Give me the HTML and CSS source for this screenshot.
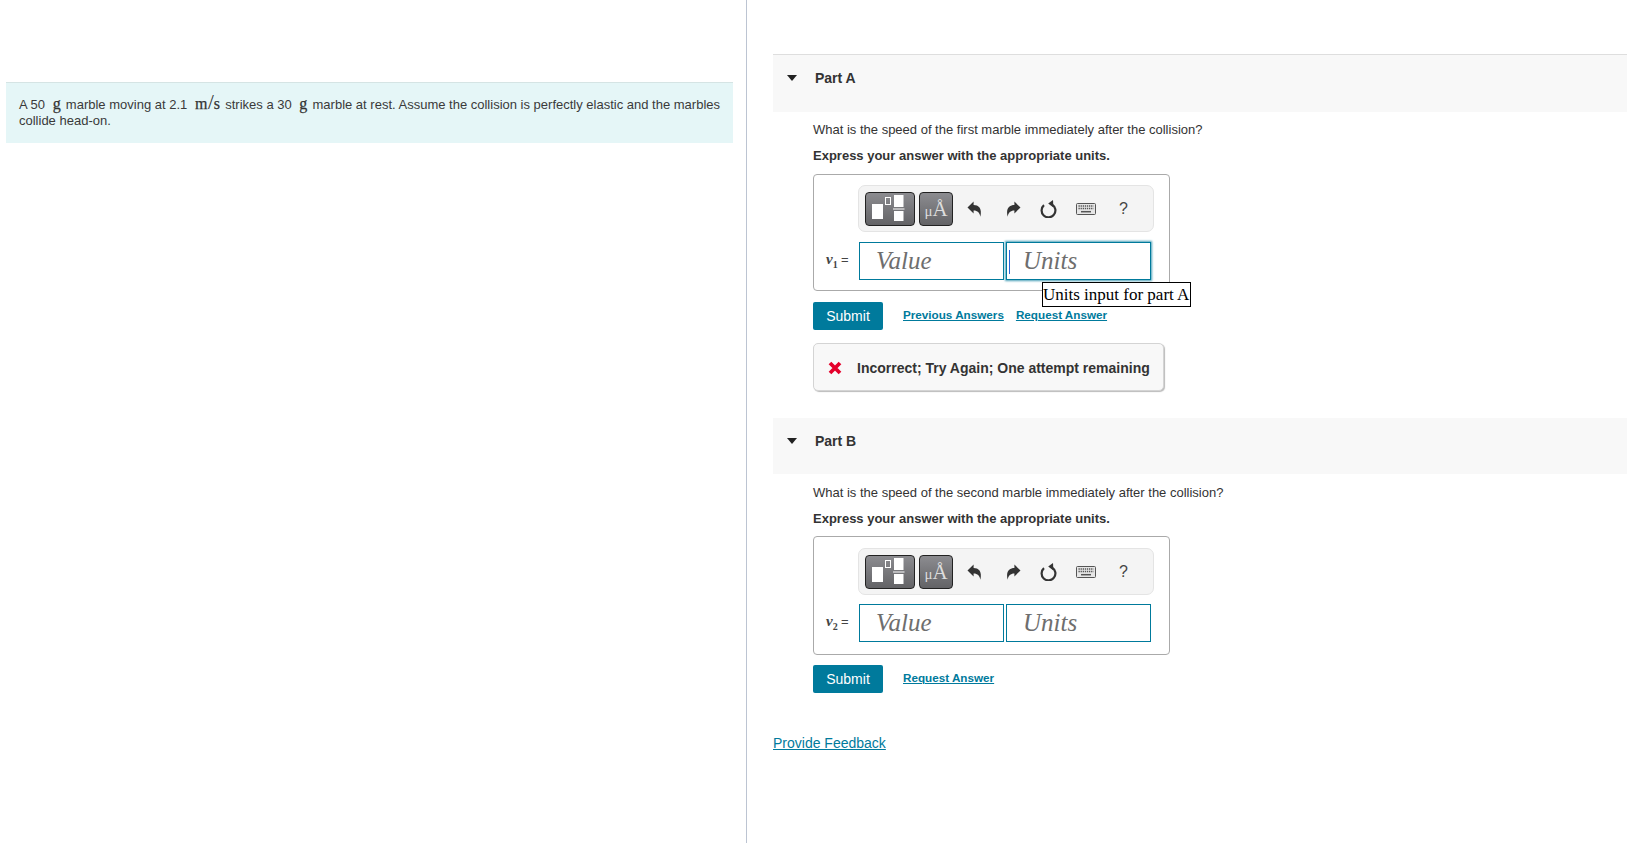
FILE: index.html
```html
<!DOCTYPE html>
<html lang="en">
<head>
<meta charset="utf-8">
<title>Marble collision</title>
<link rel="stylesheet" href="styles.css">
</head>
<body>
<svg class="defs" width="0" height="0" aria-hidden="true">
  <symbol id="i-tpl" viewBox="0 0 50 34">
    <rect x="7" y="12" width="11" height="15" fill="#fff"/>
    <rect x="20.5" y="5.5" width="5" height="7" fill="none" stroke="#fff" stroke-width="1"/>
    <rect x="29" y="3" width="9.5" height="12" fill="#fff"/>
    <rect x="28" y="16.5" width="11.5" height="1" fill="#fff"/>
    <rect x="29" y="19" width="9.5" height="10" fill="#fff"/>
  </symbol>
  <symbol id="i-undo" viewBox="0 0 16 16">
    <path d="M0.5 6.5 6.6 0.6V4C11.4 4 15.4 7 13.4 15.8 12.6 11.8 10.6 9.6 6.6 9.6V12.4Z" fill="#333"/>
  </symbol>
  <symbol id="i-redo" viewBox="0 0 16 16">
    <path d="M15.5 6.5 9.4 0.6V4C4.6 4 0.6 7 2.6 15.8 3.4 11.8 5.4 9.6 9.4 9.6V12.4Z" fill="#333"/>
  </symbol>
  <symbol id="i-reset" viewBox="0 0 18 18">
    <path d="M4 5.2A6.9 6.9 0 1 0 12.2 4.6" fill="none" stroke="#333" stroke-width="2.2"/>
    <path d="M8.2 3.4 13 0 13.4 7.4Z" fill="#333"/>
  </symbol>
  <symbol id="i-keys" viewBox="0 0 20 12">
    <rect x="0.5" y="0.5" width="19" height="11" rx="1" fill="#e6e6e6" stroke="#555"/>
    <path d="M2.5 3h15M2.5 5.5h15" stroke="#555" stroke-width="1.3" stroke-dasharray="1.3 .8"/>
    <path d="M5 8.7h10" stroke="#555" stroke-width="1.5"/>
  </symbol>
</svg>

<div class="page">
  <aside class="left">
    <p class="intro">A 50 <span class="m">g</span> marble moving at 2.1 <span class="m">m<span class="sl">/</span>s</span> strikes a 30 <span class="m">g</span> marble at rest. Assume the collision is perfectly elastic and the marbles collide head-on.</p>
  </aside>

  <main class="right">
    <section class="part">
      <header class="part-head first"><span class="caret"></span><span class="part-title">Part A</span></header>
      <div class="part-body">
        <p class="q">What is the speed of the first marble immediately after the collision?</p>
        <p class="ex">Express your answer with the appropriate units.</p>
        <div class="box">
          <div class="toolbar">
            <span class="tbtn wide"><svg width="48" height="32" viewBox="1 1 48 32"><use href="#i-tpl" width="50" height="34"/></svg></span>
            <span class="tbtn mu"><span class="mu-a">μ</span>Å</span>
            <svg class="ic undo" width="16" height="16"><use href="#i-undo"/></svg>
            <svg class="ic redo" width="16" height="16"><use href="#i-redo"/></svg>
            <svg class="ic reset" width="18" height="18"><use href="#i-reset"/></svg>
            <svg class="ic keys" width="20" height="12"><use href="#i-keys"/></svg>
            <span class="help">?</span>
          </div>
          <div class="row">
            <span class="var"><i>v</i><sub>1</sub> <span class="eq">=</span></span>
            <span class="field">Value</span>
            <span class="field focus"><span class="cursor"></span>Units
              <span class="tip">Units input for part A</span>
            </span>
          </div>
        </div>
        <div class="actions">
          <span class="submit">Submit</span>
          <a class="alink" href="#">Previous Answers</a>
          <a class="alink" href="#">Request Answer</a>
        </div>
        <div class="feedback">
          <svg class="x" width="14" height="14" viewBox="0 0 14 14"><path d="M2 2 12 12M12 2 2 12" stroke="#e4002b" stroke-width="3.8"/></svg>
          <span>Incorrect; Try Again; One attempt remaining</span>
        </div>
      </div>
    </section>

    <section class="part">
      <header class="part-head"><span class="caret"></span><span class="part-title">Part B</span></header>
      <div class="part-body">
        <p class="q">What is the speed of the second marble immediately after the collision?</p>
        <p class="ex">Express your answer with the appropriate units.</p>
        <div class="box">
          <div class="toolbar">
            <span class="tbtn wide"><svg width="48" height="32" viewBox="1 1 48 32"><use href="#i-tpl" width="50" height="34"/></svg></span>
            <span class="tbtn mu"><span class="mu-a">μ</span>Å</span>
            <svg class="ic undo" width="16" height="16"><use href="#i-undo"/></svg>
            <svg class="ic redo" width="16" height="16"><use href="#i-redo"/></svg>
            <svg class="ic reset" width="18" height="18"><use href="#i-reset"/></svg>
            <svg class="ic keys" width="20" height="12"><use href="#i-keys"/></svg>
            <span class="help">?</span>
          </div>
          <div class="row">
            <span class="var"><i>v</i><sub>2</sub> <span class="eq">=</span></span>
            <span class="field">Value</span>
            <span class="field">Units</span>
          </div>
        </div>
        <div class="actions">
          <span class="submit">Submit</span>
          <a class="alink" href="#">Request Answer</a>
        </div>
      </div>
    </section>

    <a class="provide" href="#">Provide Feedback</a>
  </main>
</div>
</body>
</html>
```

FILE: styles.css
```css
* { box-sizing: border-box; }
html, body { margin: 0; padding: 0; background: #fff; }
body { font-family: "Liberation Sans", Arial, sans-serif; color: #333; font-size: 13px; overflow: hidden; }
.defs { display: block; height: 0; }
.page { display: flex; height: 843px; }

.left { width: 747px; flex: none; border-right: 1px solid #bcc4d2; padding: 82px 0 0 6px; }
.intro { width: 727px; margin: 0; padding: 13px 4px 13px 13px; height: 61px; background: #e5f6f7; border-top: 1px solid #d5e4e4; line-height: 16px; font-size: 13px; color: #3a3a3a; }
.m { font-family: "Liberation Serif", serif; font-size: 16px; letter-spacing: .6px; margin: 0 1px 0 4px; color: #333; -webkit-text-stroke: .25px #333; }
.sl { font-size: 21px; line-height: 10px; letter-spacing: 0; -webkit-text-stroke: 0; }

.right { flex: 1; padding: 54px 0 0 26px; min-width: 0; }
.part-head { height: 56px; background: #f8f8f8; display: flex; align-items: flex-start; padding-top: 14px; }
.part-head.first { height: 58px; border-top: 1px solid #dedede; }
.caret { width: 0; height: 0; border-left: 5.5px solid transparent; border-right: 5.5px solid transparent; border-top: 6px solid #222; margin: 6px 0 0 13.5px; }
.part-title { font-weight: 700; font-size: 14px; margin-left: 18.5px; line-height: 18px; }
.part-body { padding: 9px 0 0 40px; }
.part + .part { margin-top: 27px; }
.part + .part .part-body { padding-top: 10px; }
.q { margin: 0; line-height: 18px; font-size: 13px; }
.ex { margin: 8px 0 0; line-height: 18px; font-size: 13px; font-weight: 700; }

.box { width: 357px; height: 117px; margin-top: 9px; border: 1px solid #aaa; border-radius: 4px; padding: 10px 0 0 44px; }
.part + .part .box { height: 119px; margin-top: 8px; padding-top: 11px; }
.toolbar { width: 296px; height: 47px; background: #f4f4f4; border: 1px solid #e4e4e4; border-radius: 7px; display: flex; align-items: center; padding-left: 6px; }
.tbtn { display: flex; align-items: center; justify-content: center; flex: none; height: 34px; border: 1px solid #222; border-radius: 4px; background: linear-gradient(#8c8c90, #636366); }
.wide { width: 50px; }
.mu { width: 34px; margin-left: 4px; color: #ddd; font-family: "Liberation Serif", serif; font-size: 21px; align-items: baseline; line-height: 33px; }
.mu-a { font-size: 15px; }
.ic { flex: none; }
.undo { margin-left: 14px; }
.redo { margin-left: 22px; }
.reset { margin-left: 19px; }
.keys { margin-left: 18px; }
.help { font-size: 16px; margin-left: 23px; color: #444; }
.row { display: flex; align-items: center; margin-top: 10px; margin-left: -30px; }
.part + .part .row { margin-top: 9px; }
.var { width: 31px; margin: 0 0 3px -2px; font-family: "Liberation Serif", serif; font-size: 13px; color: #444; white-space: nowrap; flex: none; }
.var i { font-weight: 700; font-size: 15px; }
.var sub { font-size: 10px; font-weight: 700; line-height: 0; }
.eq { font-family: "Liberation Sans", sans-serif; font-size: 13px; }
.field { position: relative; flex: none; width: 145px; height: 38px; border: 1px solid #007a9c; font-family: "Liberation Serif", serif; font-style: italic; font-size: 25px; line-height: 35px; padding-left: 16px; color: #6e6e6e; }
.var + .field { margin-left: 2px; }
.field + .field { margin-left: 2px; }
.focus { box-shadow: 0 0 2px 1px #4aa0b8; }
.cursor { position: absolute; left: 2px; top: 7px; width: 1px; height: 24px; background: #2a63d6; }
.tip { position: absolute; left: 35px; top: 39px; background: #fff; border: 1px solid #000; color: #000; font-family: "Liberation Serif", serif; font-style: normal; font-size: 17px; line-height: 23px; height: 25px; width: 149px; padding: 0; white-space: nowrap; z-index: 2; }

.actions { display: flex; align-items: flex-start; margin-top: 11px; height: 28px; }
.part + .part .actions { margin-top: 10px; }
.submit { width: 70px; height: 28px; background: #007a9c; color: #fff; border-radius: 2px; font-size: 14px; line-height: 28px; text-align: center; }
.alink { color: #007a9c; font-size: 11.7px; font-weight: 700; margin: 5px 0 0 12px; line-height: 16px; }
.submit + .alink { margin-left: 20px; }
.feedback { width: 351px; height: 48px; margin-top: 13px; padding: 2px 0 0 14px; background: #f8f8f8; border: 1px solid #d4d4d4; border-radius: 5px; box-shadow: 1px 1px 1px #bbb; display: flex; align-items: center; font-weight: 700; font-size: 14px; }
.x { margin-right: 15px; }
.provide { display: inline-block; margin-top: 41px; color: #007a9c; font-size: 14px; line-height: 18px; }
```
